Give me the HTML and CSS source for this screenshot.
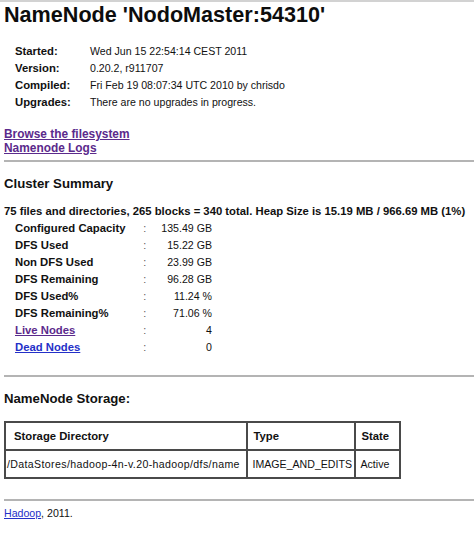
FILE: index.html
```html
<!DOCTYPE html>
<html>
<head>
<meta charset="utf-8">
<title>Hadoop NameNode NodoMaster:54310</title>
<link rel="stylesheet" href="styles.css">
</head>
<body>
<div class="page">
  <h1 class="title">NameNode 'NodoMaster:54310'</h1>

  <div class="info">
    <div class="info-label">Started:</div><div class="info-value">Wed Jun 15 22:54:14 CEST 2011</div>
    <div class="info-label">Version:</div><div class="info-value">0.20.2, r911707</div>
    <div class="info-label">Compiled:</div><div class="info-value">Fri Feb 19 08:07:34 UTC 2010 by chrisdo</div>
    <div class="info-label">Upgrades:</div><div class="info-value">There are no upgrades in progress.</div>
  </div>

  <div class="nav-links">
    <a class="nav-link visited" href="#">Browse the filesystem</a>
    <a class="nav-link visited" href="#">Namenode Logs</a>
  </div>

  <hr class="rule rule-first">

  <h2 class="section-title">Cluster Summary</h2>
  <div class="summary-line">75 files and directories, 265 blocks = 340 total. Heap Size is 15.19 MB / 966.69 MB (1%)</div>

  <div class="stats">
    <div class="stat-label">Configured Capacity</div><div class="stat-colon">:</div><div class="stat-value">135.49 GB</div>
    <div class="stat-label">DFS Used</div><div class="stat-colon">:</div><div class="stat-value">15.22 GB</div>
    <div class="stat-label">Non DFS Used</div><div class="stat-colon">:</div><div class="stat-value">23.99 GB</div>
    <div class="stat-label">DFS Remaining</div><div class="stat-colon">:</div><div class="stat-value">96.28 GB</div>
    <div class="stat-label">DFS Used%</div><div class="stat-colon">:</div><div class="stat-value">11.24 %</div>
    <div class="stat-label">DFS Remaining%</div><div class="stat-colon">:</div><div class="stat-value">71.06 %</div>
    <div class="stat-label"><a class="stat-link visited" href="#">Live Nodes</a></div><div class="stat-colon">:</div><div class="stat-value">4</div>
    <div class="stat-label"><a class="stat-link fresh" href="#">Dead Nodes</a></div><div class="stat-colon">:</div><div class="stat-value">0</div>
  </div>

  <hr class="rule rule-second">

  <h2 class="section-title section-storage">NameNode Storage:</h2>

  <table class="storage">
    <colgroup>
      <col class="col-dir">
      <col class="col-type">
      <col class="col-state">
    </colgroup>
    <thead>
      <tr>
        <th class="cell th-dir">Storage Directory</th>
        <th class="cell th-type">Type</th>
        <th class="cell th-state">State</th>
      </tr>
    </thead>
    <tbody>
      <tr>
        <td class="cell td-dir">/DataStores/hadoop-4n-v.20-hadoop/dfs/name</td>
        <td class="cell td-type">IMAGE_AND_EDITS</td>
        <td class="cell td-state">Active</td>
      </tr>
    </tbody>
  </table>

  <hr class="rule rule-third">

  <div class="footer"><a class="footer-link" href="#">Hadoop</a>, 2011.</div>
</div>
</body>
</html>
```

FILE: styles.css
```css
html, body {
  margin: 0;
  padding: 0;
  background: #ffffff;
}

body {
  font-family: "Liberation Sans", Arial, sans-serif;
  color: #111111;
  border-top: 2px solid #d2d2d2;
}

.page {
  padding-left: 4px;
}

.title {
  margin: 1px 0 0;
  font-size: 21.6px;
  line-height: 24px;
  font-weight: bold;
  color: #0d0d0d;
}

.info {
  display: grid;
  grid-template-columns: 75px auto;
  margin: 16px 0 0 11px;
  line-height: 17px;
}

.info-label {
  font-weight: bold;
  font-size: 11.3px;
}

.info-value {
  font-size: 10.6px;
}

.nav-links {
  display: flex;
  flex-direction: column;
  align-items: flex-start;
  margin-top: 15.6px;
}

.nav-link {
  font-weight: bold;
  font-size: 11.9px;
  line-height: 14px;
}

.visited {
  color: #5b2a8c;
}

.fresh {
  color: #2430c8;
}

.rule {
  border: 0;
  height: 2px;
  background: #b4b4b4;
  margin: 0;
}

.rule-first {
  margin-top: 5.6px;
}

.rule-second {
  margin-top: 19.3px;
}

.rule-third {
  margin-top: 20px;
}

.section-title {
  margin: 13.4px 0 0;
  font-size: 13.2px;
  line-height: 16px;
  font-weight: bold;
}

.section-storage {
  margin-top: 14.2px;
}

.summary-line {
  margin-top: 12.7px;
  font-size: 11.3px;
  font-weight: bold;
  line-height: 14px;
  white-space: nowrap;
}

.stats {
  display: grid;
  grid-template-columns: 128.3px 8px 60.7px;
  margin: 1.4px 0 0 11px;
  line-height: 17px;
}

.stat-label {
  font-weight: bold;
  font-size: 11.3px;
}

.stat-link {
  font-weight: bold;
}

.stat-colon {
  font-size: 10.6px;
  color: #555555;
}

.stat-value {
  font-size: 10.6px;
  text-align: right;
}

.storage {
  margin-top: 13.5px;
  border-collapse: collapse;
  table-layout: fixed;
  width: 395px;
  border: 2px solid #4a4a4a;
}

.col-dir { width: 241.5px; }
.col-type { width: 108px; }
.col-state { width: 45.5px; }

.cell {
  border: 2px solid #4a4a4a;
  height: 26px;
  padding: 0;
  line-height: 14px;
  vertical-align: middle;
  text-align: left;
  white-space: nowrap;
}

th.cell {
  font-weight: bold;
  font-size: 11.3px;
}

td.cell {
  font-size: 10.6px;
}

.cell.th-dir { padding-left: 8px; }
.cell.th-type { padding-left: 6px; }
.cell.th-state { padding-left: 6px; }
.cell.td-dir { padding-left: 1px; letter-spacing: 0.36px; }
.cell.td-type { padding-left: 5px; }
.cell.td-state { padding-left: 5px; }

.footer {
  margin-top: 5.3px;
  font-size: 10.6px;
  line-height: 14px;
}

.footer-link {
  color: #2430c8;
}
```
